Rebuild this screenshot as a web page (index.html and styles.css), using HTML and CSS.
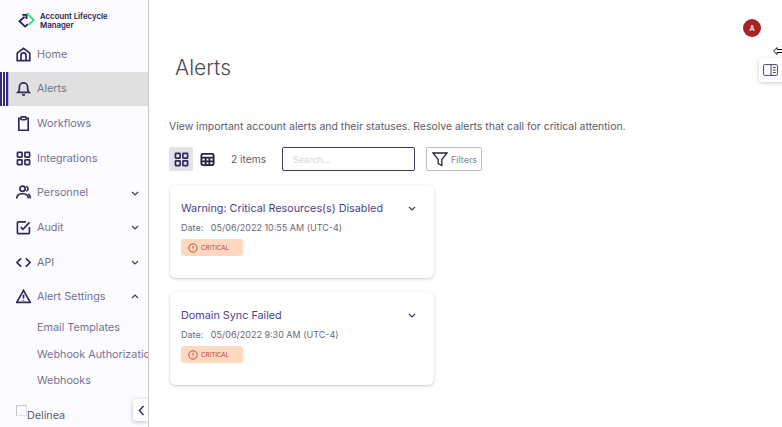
FILE: index.html
```html
<!DOCTYPE html>
<html lang="en">
<head>
<meta charset="utf-8">
<title>Alerts</title>
<link rel="stylesheet" href="styles.css">
</head>
<body>
<div class="app">
  <aside class="sidebar">
    <div class="brand">
      <svg class="brand-mark" viewBox="0 0 18 18" width="17" height="17" fill="none" stroke-width="1.9">
        <path d="M7 5 L1.500 9.800 L7.500 15.500 L10.500 12.800" stroke="#26204f"/>
        <path d="M4.500 3 L9 3 L9 7.500" stroke="#26204f"/>
        <path d="M9.500 1.200 L16.600 8.500 L11.500 13.500" stroke="#1fe07a"/>
      </svg>
      <div class="brand-name">Account Lifecycle<br>Manager</div>
    </div>
    <nav class="nav">
      <a class="item"><svg class="ic" viewBox="0 0 16 16"><path d="M1.300 14.600V6.600L8 1.400l6.700 5.200v8z"/><path d="M5.300 14.600V9a2.700 2.700 0 0 1 5.400 0v5.600"/></svg><span>Home</span></a>
      <a class="item active"><svg class="ic" viewBox="0 0 16 16"><path d="M2 12.200c1.200-1 1.600-2 1.600-4V6.400a4.400 4.400 0 0 1 8.800 0v1.800c0 2 .4 3 1.600 4z"/><path d="M6.400 14.800h3.200"/></svg><span>Alerts</span></a>
      <a class="item"><svg class="ic" viewBox="0 0 16 16"><path d="M5.200 2.600H3v12.600h10V2.600h-2.200"/><rect x="5.200" y="1" width="5.600" height="3" rx="1"/></svg><span>Workflows</span></a>
      <a class="item"><svg class="ic" viewBox="0 0 16 16"><rect x="1.500" y="1.500" width="5" height="5" rx=".6"/><rect x="9.500" y="1.500" width="5" height="5" rx=".6"/><rect x="1.500" y="9.500" width="5" height="5" rx=".6"/><rect x="9.500" y="9.500" width="5" height="5" rx=".6"/></svg><span>Integrations</span></a>
      <a class="item"><svg class="ic" viewBox="0 0 16 16"><circle cx="7" cy="4" r="2.800"/><path d="M.8 14.500c0-3.600 2.400-5.200 6.200-5.200s6.200 1.600 6.200 5.200"/><path d="M11 1.400a2.800 2.800 0 0 1 0 5.200"/><path d="M13.200 9.600c1.500.8 2.200 2.400 2.200 4.900"/></svg><span>Personnel</span><svg class="chev" viewBox="0 0 8 5"><path d="M1 1l3 3 3-3"/></svg></a>
      <a class="item"><svg class="ic" viewBox="0 0 16 16"><path d="M14.300 7.500v6a1 1 0 0 1-1 1H2.500a1 1 0 0 1-1-1V3a1 1 0 0 1 1-1h8"/><path d="M5 7.500l2.500 2.500 6.800-7.500"/></svg><span>Audit</span><svg class="chev" viewBox="0 0 8 5"><path d="M1 1l3 3 3-3"/></svg></a>
      <a class="item"><svg class="ic" viewBox="0 0 16 16"><path d="M5.500 3.500L1 8l4.500 4.500"/><path d="M10.500 3.500L15 8l-4.500 4.500"/></svg><span>API</span><svg class="chev" viewBox="0 0 8 5"><path d="M1 1l3 3 3-3"/></svg></a>
      <a class="item"><svg class="ic" viewBox="0 0 16 16"><path d="M8 1.500L.8 14.300h14.400z"/><path d="M8 6v4.200"/><path d="M8 11.800v.8"/></svg><span>Alert Settings</span><svg class="chev" viewBox="0 0 8 5"><path d="M1 4l3-3 3 3"/></svg></a>
      <a class="sub">Email Templates</a>
      <a class="sub">Webhook Authorization</a>
      <a class="sub">Webhooks</a>
    </nav>
    <div class="foot"><span class="broken"></span><span class="foot-text">Delinea</span></div>
    <button class="collapse" type="button" aria-label="Collapse"><svg viewBox="0 0 7 11" width="7" height="11"><path d="M5.500 1L1.500 5.500l4 4.500"/></svg></button>
  </aside>
  <main class="main">
    <h1 class="title">Alerts</h1>
    <p class="lead">View important account alerts and their statuses. Resolve alerts that call for critical attention.</p>
    <div class="toolbar">
      <button class="view view-on" type="button" aria-label="Cards"><svg class="ic" viewBox="0 0 16 16"><rect x="1.500" y="1.500" width="5" height="5" rx=".6"/><rect x="9.500" y="1.500" width="5" height="5" rx=".6"/><rect x="1.500" y="9.500" width="5" height="5" rx=".6"/><rect x="9.500" y="9.500" width="5" height="5" rx=".6"/></svg></button>
      <button class="view" type="button" aria-label="Table"><svg class="ic ic-dark" viewBox="0 0 16 16"><rect x="1.500" y="2" width="13" height="12" rx="1.500"/><path d="M1.500 6h13M1.500 10h13M6 6v8M10 6v8"/></svg></button>
      <span class="count">2 items</span>
      <input class="search" type="text" placeholder="Search...">
      <button class="filters" type="button"><svg viewBox="0 0 16 16" width="16" height="16"><path d="M1 2h14L9.800 8.500V14.500L6.200 12.500V8.500z"/></svg><span>Filters</span></button>
    </div>
    <section class="card">
      <div class="card-head"><span class="card-title">Warning: Critical Resources(s) Disabled</span><svg class="chev" viewBox="0 0 8 5"><path d="M1 1l3 3 3-3"/></svg></div>
      <div class="date">Date:&nbsp;&nbsp; 05/06/2022 10:55 AM (UTC-4)</div>
      <div class="badge"><svg viewBox="0 0 10 10" width="10" height="10"><circle cx="5" cy="5" r="4.200"/><path d="M5 2.800v2.800M5 6.800v.6"/></svg><span>CRITICAL</span></div>
    </section>
    <section class="card">
      <div class="card-head"><span class="card-title">Domain Sync Failed</span><svg class="chev" viewBox="0 0 8 5"><path d="M1 1l3 3 3-3"/></svg></div>
      <div class="date">Date:&nbsp;&nbsp; 05/06/2022 9:30 AM (UTC-4)</div>
      <div class="badge"><svg viewBox="0 0 10 10" width="10" height="10"><circle cx="5" cy="5" r="4.200"/><path d="M5 2.800v2.800M5 6.800v.6"/></svg><span>CRITICAL</span></div>
    </section>
  </main>
  <div class="avatar">A</div>
  <svg class="cursor" viewBox="0 0 10 10" width="10" height="10"><path d="M.6 5L4 1.600V3.500h5.400v3H4v1.900z"/></svg>
  <div class="side-tab"><svg viewBox="0 0 15 12" width="15" height="12"><rect x=".6" y=".6" width="13.800" height="10.800" rx=".8"/><path d="M8 .6v10.800M10 3.500h2.800M10 6h2.800M10 8.500h2.800"/></svg></div>
</div>
</body>
</html>
```
FILE: styles.css
```css
* { box-sizing: border-box; }
html, body { margin: 0; height: 100%; overflow: hidden; background: #fff; }
body { font-family: Inter, "Noto Sans", sans-serif; color: #47446a; }
.app { display: flex; height: 427px; width: 782px; position: relative; overflow: hidden; }

.sidebar { width: 149px; flex: none; background: #fcfcff; border-right: 1px solid #c9c9cc; position: relative; overflow: hidden; }
.brand { display: flex; align-items: center; gap: 5px; height: 37px; padding: 4px 0 0 18px; }
.brand-mark { flex: none; }
.brand-name { font-size: 7.800px; line-height: 8.500px; font-weight: 600; color: #26204f; white-space: nowrap; }
.nav { display: flex; flex-direction: column; }
.item { display: flex; align-items: center; height: 34.650px; padding-left: 16px; font-size: 10.800px; color: #75728f; white-space: nowrap; position: relative; }
.item span { margin-left: 6px; }
.item.active { background: #e0e0e0; }
.item.active::before { content: ""; position: absolute; left: 0; top: 0; bottom: 0; width: 9px; background: linear-gradient(90deg, #38277a 0 2px, #fcfcff 2px 3px, #38277a 3px 5px, #fcfcff 5px 6px, #38277a 6px 8px, #b9b6cf 8px 9px); }
.ic { width: 15px; height: 15px; flex: none; fill: none; stroke: #2f2a5c; stroke-width: 1.800; }
.ic-dark { stroke: #26233f; stroke-width: 2; }
.chev { width: 8px; height: 5px; fill: none; stroke: #3d3a5f; stroke-width: 1.200; flex: none; margin-left: auto; }
.item .chev { position: absolute; left: 130.500px; top: 15px; }
.sub { display: block; height: 26.500px; line-height: 27.500px; padding-left: 37px; font-size: 10.800px; color: #75728f; white-space: nowrap; }
.foot { position: absolute; left: 16px; top: 405px; height: 18px; display: flex; }
.broken { width: 11px; height: 11px; border: 1px solid #c4c4c4; border-right-color: #dedede; border-bottom-color: #dedede; }
.foot-text { font-size: 10.800px; color: #5f5c78; margin-top: 4px; }
.collapse { position: absolute; left: 133px; top: 399px; width: 15px; height: 22px; padding: 0 0 0 1px; border: 0; background: #fff; box-shadow: 0 1px 4px rgba(0,0,0,.25); border-radius: 3px 0 0 3px; display: flex; align-items: center; justify-content: center; }
.collapse svg { fill: none; stroke: #2f2a5c; stroke-width: 1.500; }

.main { flex: 1; min-width: 0; padding: 54px 0 0 20px; }
.title { margin: 0 0 0 6px; font-size: 21px; line-height: 28px; font-weight: 300; color: #4a4a55; }
.lead { margin: 38px 0 0; font-size: 10.450px; line-height: 14px; color: #5b5b68; white-space: nowrap; }
.toolbar { display: flex; align-items: center; margin-top: 13px; height: 24px; }
.view { width: 24px; height: 24px; padding: 0; border: 0; border-radius: 2px; background: transparent; display: flex; align-items: center; justify-content: center; margin-right: 2px; }
.view-on { background: #e3e3e6; }
.count { font-size: 10.200px; color: #5b5b68; margin-left: 10px; width: 51px; }
.search { width: 133px; height: 24px; border: 1px solid #3b3862; border-radius: 2px; padding: 0 10px; font: 9px Inter, sans-serif; outline: none; background: #fff; }
.search::placeholder { color: #d6d6da; }
.filters { margin-left: 11px; width: 56px; height: 24px; border: 1px solid #bcbcc2; border-radius: 2px; background: #fff; padding: 0 0 0 5px; display: flex; align-items: center; gap: 3px; font: 9px Inter, sans-serif; color: #85858f; }
.filters svg { fill: none; stroke: #26233f; stroke-width: 1.300; flex: none; }

.card { width: 264px; height: 93px; margin: 14px 0 14px 1px; background: #fff; border-radius: 6px; box-shadow: 0 1px 3px rgba(0,0,0,.22); padding: 15px 11px 0; }
.card-head { display: flex; align-items: center; height: 16px; }
.card-title { font-size: 10.800px; color: #4c3f8a; white-space: nowrap; }
.card-head .chev { margin-right: 7px; }
.date { margin-top: 5px; font-size: 9px; line-height: 13px; color: #6a6a74; white-space: nowrap; }
.badge { margin-top: 5px; width: 62px; height: 17px; background: #ffd8bf; border-radius: 3px; display: flex; align-items: center; padding-left: 7px; gap: 3px; font-size: 6.200px; color: #b3462a; }
.badge svg { fill: none; stroke: #b3462a; stroke-width: .9; flex: none; }

.avatar { position: absolute; left: 743px; top: 19px; width: 18px; height: 18px; border-radius: 50%; background: #a82424; color: #f3dcdc; font-size: 7px; font-weight: 700; display: flex; align-items: center; justify-content: center; }
.cursor { position: absolute; left: 773px; top: 46px; fill: #fff; stroke: #111; stroke-width: 1; }
.side-tab { position: absolute; left: 759px; top: 58px; width: 30px; height: 24px; background: #fff; border-radius: 3px; box-shadow: 0 1px 4px rgba(0,0,0,.2); padding: 6px 0 0 4px; }
.side-tab svg { fill: none; stroke: #47447e; stroke-width: 1; display: block; }
```
